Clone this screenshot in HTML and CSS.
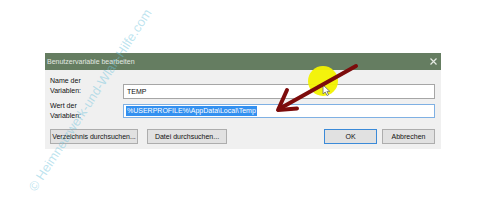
FILE: index.html
```html
<!DOCTYPE html>
<html lang="de">
<head>
<meta charset="utf-8">
<title>Benutzervariable bearbeiten</title>
<link rel="stylesheet" href="styles.css">
</head>
<body>
<div class="page">
  <div class="dialog">
    <div class="titlebar">
      <span class="title">Benutzervariable bearbeiten</span>
      <svg class="close" width="7" height="7" viewBox="0 0 7 7"><path d="M0.5 0.5 L6.5 6.5 M6.5 0.5 L0.5 6.5" stroke="#e6ebe4" stroke-width="1.2" fill="none"/></svg>
    </div>
    <div class="content">
      <div class="row row-name">
        <div class="label">Name der<br>Variablen:</div>
        <div class="field field-name">TEMP</div>
      </div>
      <div class="row row-value">
        <div class="label">Wert der<br>Variablen:</div>
        <div class="field field-value"><span class="sel">%USERPROFILE%\AppData\Local\Temp</span></div>
      </div>
      <div class="buttons">
        <div class="btn-group btn-group-left">
          <button class="btn btn-dir">Verzeichnis durchsuchen...</button>
          <button class="btn btn-file">Datei durchsuchen...</button>
        </div>
        <div class="btn-group btn-group-right">
          <button class="btn btn-ok">OK</button>
          <button class="btn btn-cancel">Abbrechen</button>
        </div>
      </div>
    </div>
  </div>
  <div class="watermark">© Heimnetzwerk-und-Wlan-Hilfe.com</div>
  <svg class="annotation" width="500" height="200" viewBox="0 0 500 200">
    <circle cx="323" cy="81" r="15" fill="#f2f200" fill-opacity="0.95"/>
    <path d="M323 85 L323 94 L325.2 92 L327 95.5 L328.6 94.8 L326.9 91.4 L329.8 91.4 Z" fill="#ffffff" stroke="#6a6a6a" stroke-width="0.8" stroke-linejoin="round"/>
    <g stroke="#7c0b0b" stroke-width="4" stroke-linecap="round" stroke-linejoin="round" fill="none">
      <path d="M356 66 L279 109"/>
      <path d="M287 90 L278 110 L297 108.5"/>
    </g>
  </svg>
</div>
</body>
</html>
```

FILE: styles.css
```css
html, body {
  margin: 0;
  padding: 0;
  background: #ffffff;
}

.page {
  position: relative;
  width: 500px;
  height: 200px;
  overflow: hidden;
  padding: 53px 0 0 45px;
  box-sizing: border-box;
  font-family: "Liberation Sans", Arial, sans-serif;
  font-size: 7px;
  color: #111111;
}

.dialog {
  width: 396px;
}

.titlebar {
  height: 17px;
  background: #657d61;
  display: flex;
  align-items: center;
  justify-content: space-between;
  padding: 0 4px 0 2px;
  box-sizing: border-box;
}

.title {
  color: #e3e9e1;
  font-size: 7px;
  line-height: 17px;
}

.close {
  display: block;
}

.content {
  background: #f0f0f0;
  padding: 6px 6px 5px 5px;
}

.row {
  display: flex;
  align-items: flex-start;
}

.row-value {
  margin-top: 2px;
}

.label {
  width: 73px;
  line-height: 9.5px;
  flex: none;
}

.field {
  width: 312px;
  box-sizing: border-box;
  background: #ffffff;
  display: flex;
  align-items: center;
  padding-left: 3px;
  line-height: 10px;
}

.field-name {
  margin-top: 8px;
  height: 15px;
  border: 1px solid #a6a6a6;
}

.field-value {
  margin-top: 3px;
  height: 14px;
  border: 1px solid #7fb0e3;
}

.sel {
  background: #3390f0;
  color: #ffffff;
  padding: 0 1px;
  margin-left: -1px;
}

.buttons {
  margin-top: 9px;
  display: flex;
  justify-content: space-between;
}

.btn-group {
  display: flex;
}

.btn-group-left {
  gap: 9px;
}

.btn-group-right {
  gap: 5px;
}

.btn {
  height: 15px;
  margin: 0;
  padding: 0;
  box-sizing: border-box;
  border: 1px solid #adadad;
  background: #e1e1e1;
  font-family: "Liberation Sans", Arial, sans-serif;
  font-size: 7px;
  color: #111111;
  line-height: 13px;
}

.btn-dir {
  width: 88px;
}

.btn-file {
  width: 80px;
}

.btn-ok {
  width: 53px;
  border-color: #3b8ad8;
}

.btn-cancel {
  width: 53px;
}

.watermark {
  position: absolute;
  left: 90px;
  top: 100px;
  transform: translate(-50%, -50%) rotate(-57deg);
  white-space: nowrap;
  font-family: "Liberation Sans", Arial, sans-serif;
  font-size: 13px;
  color: rgba(110, 195, 220, 0.45);
}

.annotation {
  position: absolute;
  left: 0;
  top: 0;
  pointer-events: none;
}
```
